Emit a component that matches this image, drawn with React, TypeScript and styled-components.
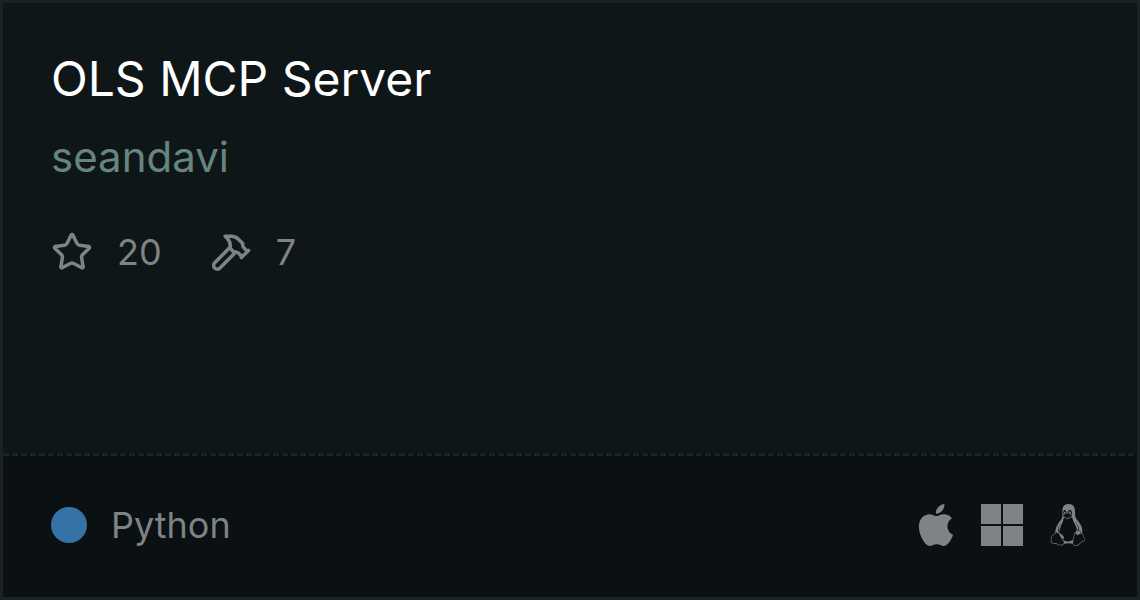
import styled, { createGlobalStyle } from "styled-components";
import { Star } from "lucide-react";
import { SiApple, SiLinux } from "react-icons/si";

const App = () => {
  return (
    <>
      <GlobalStyle />
      <Card>
        <Body>
          <Title>OLS MCP Server</Title>
          <Author>seandavi</Author>
          <Stats>
            <Stat>
              <Star size={42} />
              <span>20</span>
            </Stat>
            <Stat>
              <HammerIcon />
              <span>7</span>
            </Stat>
          </Stats>
        </Body>
        <Footer>
          <Language>
            <Dot $color="#3572a5" />
            <span>Python</span>
          </Language>
          <Platforms>
            <SiApple size={42} />
            <WindowsIcon />
            <SiLinux size={42} />
          </Platforms>
        </Footer>
      </Card>
    </>
  );
};

export default App;

const HammerIcon = () => (
  <svg
    width="42"
    height="42"
    viewBox="0.4 0 24 24"
    fill="none"
    stroke="currentColor"
    strokeWidth="2"
    strokeLinecap="round"
    strokeLinejoin="round"
  >
    <path d="m15 12.2-8.9 9a2.12 2.12 0 0 1-3-3L12 9.2" />
    <path d="m18.3 15.2 4.1-4.1" />
    <path d="m21.8 11.6-2.1-2a2 2 0 0 1-.6-1.4V7.1l-2.3-2.3A6 6 0 0 0 12.6 3H9l.92.82A6.18 6.18 0 0 1 12 8.5V10l2 2h1.2a2 2 0 0 1 1.4.6l2.1 2.1" />
  </svg>
);

const WindowsIcon = () => (
  <svg width="42" height="42" viewBox="0 0 42 42" fill="currentColor">
    <path d="M0 0h20v20H0zM22 0h20v20H22zM0 22h20v20H0zM22 22h20v20H22z" />
  </svg>
);

const GlobalStyle = createGlobalStyle`
  * {
    box-sizing: border-box;
  }

  body {
    margin: 0;
    background-color: #0f1618;
    font-family: "Inter", sans-serif;
  }

  svg {
    display: block;
    flex-shrink: 0;
  }
`;

const Card = styled.div`
  display: flex;
  flex-direction: column;
  width: 1140px;
  height: 600px;
  border: 3px solid #1b2224;
  background-color: #0f1618;
`;

const Body = styled.div`
  flex: 1;
  padding: 40px 48px 0;
`;

const Title = styled.h1`
  margin: 0;
  font-size: 48px;
  font-weight: 400;
  line-height: 72px;
  color: #fff;
`;

const Author = styled.div`
  margin-top: 6px;
  font-size: 42px;
  line-height: 72px;
  color: #678580;
`;

const Stats = styled.div`
  display: flex;
  gap: 48px;
  margin-top: 32px;
  color: #7e8385;
`;

const Stat = styled.div`
  display: flex;
  align-items: center;
  gap: 24px;
  font-size: 36px;
  line-height: 54px;
`;

const Footer = styled.div`
  display: flex;
  align-items: center;
  justify-content: space-between;
  height: 144px;
  padding: 0 48px;
  background: repeating-linear-gradient(
        to right,
        #1b2224 0 6px,
        transparent 6px 9px
      )
      top / 100% 3px no-repeat,
    #0b1013;
  color: #7e8385;
`;

const Language = styled.div`
  display: flex;
  align-items: center;
  gap: 24px;
  font-size: 36px;
  line-height: 54px;
`;

const Dot = styled.span<{ $color: string }>`
  width: 36px;
  height: 36px;
  border-radius: 50%;
  background-color: ${({ $color }) => $color};
`;

const Platforms = styled.div`
  display: flex;
  align-items: center;
  gap: 24px;
`;
